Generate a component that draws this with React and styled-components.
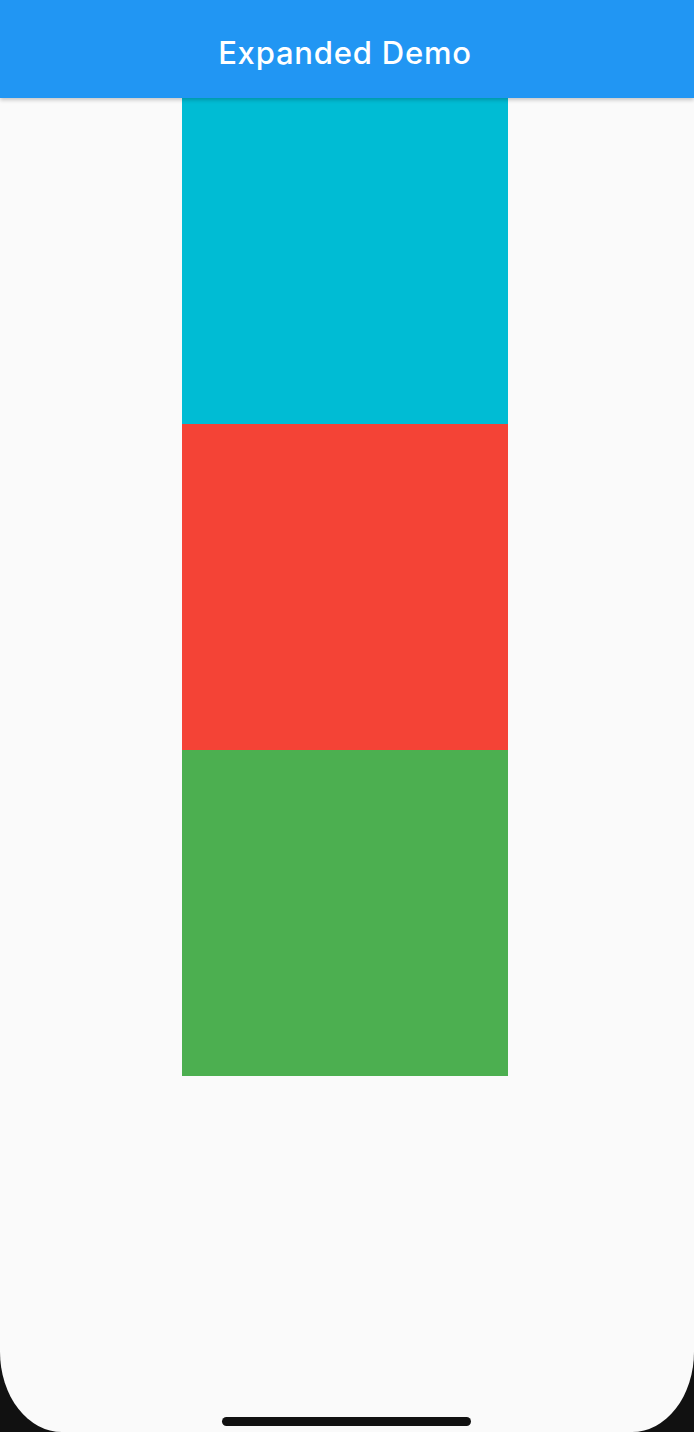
import React from "react";
import styled, { createGlobalStyle } from "styled-components";

const GlobalStyle = createGlobalStyle`
  html, body {
    margin: 0;
    padding: 0;
    background: #111;
  }
  body {
    font-family: Inter, Roboto, "Noto Sans", sans-serif;
  }
`;

const Screen = styled.div`
  position: relative;
  width: 694px;
  height: 1432px;
  background: #fafafa;
  border-bottom-left-radius: 62px 80px;
  border-bottom-right-radius: 62px 80px;
  overflow: hidden;
  display: flex;
  flex-direction: column;
`;

const AppBar = styled.header`
  position: relative;
  z-index: 2;
  height: 98px;
  flex: none;
  background: #2196f3;
  display: flex;
  align-items: flex-end;
  justify-content: center;
  padding-right: 4px;
  box-shadow: 0 2px 4px rgba(0, 0, 0, 0.22);
`;

const Title = styled.h1`
  margin: 0 0 26px;
  color: #fff;
  font-size: 31px;
  font-weight: 500;
  letter-spacing: 0.8px;
  line-height: 38px;
`;

const Body = styled.main`
  flex: 1;
  display: flex;
  justify-content: center;
  padding-right: 4px;
`;

const Column = styled.div`
  width: 326px;
  height: 978px;
  display: flex;
  flex-direction: column;
`;

const Block = styled.div`
  flex: 1;
  background: ${(p) => p.color};
`;

const HomeIndicator = styled.div`
  position: absolute;
  left: 222px;
  bottom: 6px;
  width: 249px;
  height: 9px;
  border-radius: 5px;
  background: #111;
`;

const colors = ["#00bcd4", "#f44336", "#4caf50"];

const App = () => {
  return (
    <>
      <GlobalStyle />
      <Screen>
        <AppBar>
          <Title>Expanded Demo</Title>
        </AppBar>
        <Body>
          <Column>
            {colors.map((c) => (
              <Block key={c} color={c} />
            ))}
          </Column>
        </Body>
        <HomeIndicator />
      </Screen>
    </>
  );
};

export default App;
